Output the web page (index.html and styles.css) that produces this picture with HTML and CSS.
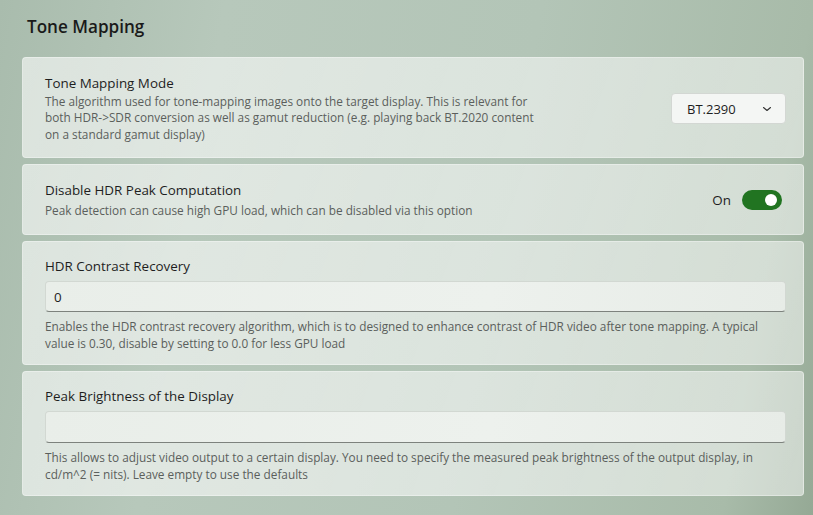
FILE: index.html
```html
<!DOCTYPE html>
<html>
<head>
<meta charset="utf-8">
<link rel="stylesheet" href="styles.css">
</head>
<body>
<div class="page">
  <h1 class="title">Tone Mapping</h1>
  <div class="cards">
    <div class="card row">
      <div class="text">
        <div class="label">Tone Mapping Mode</div>
        <div class="desc narrow">The algorithm used for tone-mapping images onto the target display. This is relevant for both HDR-&gt;SDR conversion as well as gamut reduction (e.g. playing back BT.2020 content on a standard gamut display)</div>
      </div>
      <div class="select">
        <span>BT.2390</span>
        <svg class="chev" width="10" height="6" viewBox="0 0 10 6"><path d="M1.5 1.5 L5 4.5 L8.5 1.5" fill="none" stroke="#333" stroke-width="1.1" stroke-linecap="round" stroke-linejoin="round"/></svg>
      </div>
    </div>
    <div class="card row short">
      <div class="text">
        <div class="label">Disable HDR Peak Computation</div>
        <div class="desc">Peak detection can cause high GPU load, which can be disabled via this option</div>
      </div>
      <div class="toggle-wrap">
        <span class="on">On</span>
        <div class="toggle"><div class="knob"></div></div>
      </div>
    </div>
    <div class="card col c3">
      <div class="label">HDR Contrast Recovery</div>
      <div class="input">0</div>
      <div class="desc">Enables the HDR contrast recovery algorithm, which is to designed to enhance contrast of HDR video after tone mapping. A typical value is 0.30, disable by setting to 0.0 for less GPU load</div>
    </div>
    <div class="card col">
      <div class="label">Peak Brightness of the Display</div>
      <div class="input"></div>
      <div class="desc">This allows to adjust video output to a certain display. You need to specify the measured peak brightness of the output display, in cd/m^2 (= nits). Leave empty to use the defaults</div>
    </div>
  </div>
</div>
</body>
</html>
```

FILE: styles.css
```css
html, body {
  margin: 0;
  padding: 0;
  height: 100%;
}
body {
  font-family: "Open Sans", "Noto Sans", sans-serif;
  background: linear-gradient(100deg, #a9bcad 0%, #b7c8bb 25%, #b3c5b7 60%, #a8bba9 90%, #95a995 100%);
  color: #1b1b1b;
  overflow: hidden;
}
.page {
  padding: 14px 9px 0 22px;
}
.title {
  margin: 0 0 17px 5px;
  font-size: 17.1px;
  font-weight: 600;
  line-height: 26px;
  color: #1a1a1a;
}
.cards {
  display: flex;
  flex-direction: column;
  gap: 6px;
}
.card {
  background: linear-gradient(110deg, rgba(255,255,255,0.58), rgba(255,255,255,0.50));
  border: 1px solid rgba(255,255,255,0.35);
  border-radius: 4px;
  box-sizing: border-box;
}
.row {
  display: flex;
  align-items: center;
  justify-content: space-between;
  padding: 14px 17px 14px 22px;
  height: 101px;
}
.row.short {
  height: 71px;
  padding-top: 12px;
  padding-bottom: 12px;
}
.col {
  display: flex;
  flex-direction: column;
  padding: 14px 17px 13px 22px;
  height: 125px;
}
.col.c3 {
  height: 124px;
}
.label {
  font-size: 13.4px;
  line-height: 20px;
  color: #1e1e1e;
}
.desc {
  font-size: 11.8px;
  line-height: 16.5px;
  color: #5b5f5c;
}
.row.short .desc {
  margin-top: 2px;
}
.desc.narrow {
  width: 500px;
}
.select {
  width: 115px;
  height: 31px;
  box-sizing: border-box;
  background: #f4f6f4;
  border: 1px solid #d3d7d3;
  border-radius: 4px;
  display: flex;
  align-items: center;
  justify-content: space-between;
  padding: 0 13px 0 15px;
  font-size: 13px;
  color: #1e1e1e;
  align-self: flex-start;
  margin-top: 21px;
}
.chev {
  display: block;
}
.toggle-wrap {
  display: flex;
  align-items: center;
  gap: 11px;
  margin-right: 4px;
}
.on {
  font-size: 13.4px;
  color: #1e1e1e;
}
.toggle {
  width: 40px;
  height: 20px;
  border-radius: 10px;
  background: #217421;
  display: flex;
  align-items: center;
  justify-content: flex-end;
  padding-right: 5px;
  box-sizing: border-box;
}
.knob {
  width: 12px;
  height: 12px;
  border-radius: 50%;
  background: #ffffff;
}
.input {
  margin-top: 5px;
  margin-bottom: 6px;
  height: 32px;
  box-sizing: border-box;
  background: linear-gradient(100deg, #e9eee9, #edf1ed 60%, #e7ece7);
  border: 1px solid #d2d8d2;
  border-bottom: 1px solid #7d827d;
  border-radius: 4px;
  padding: 0 8px;
  display: flex;
  align-items: center;
  font-size: 13.4px;
  color: #1e1e1e;
}
```
